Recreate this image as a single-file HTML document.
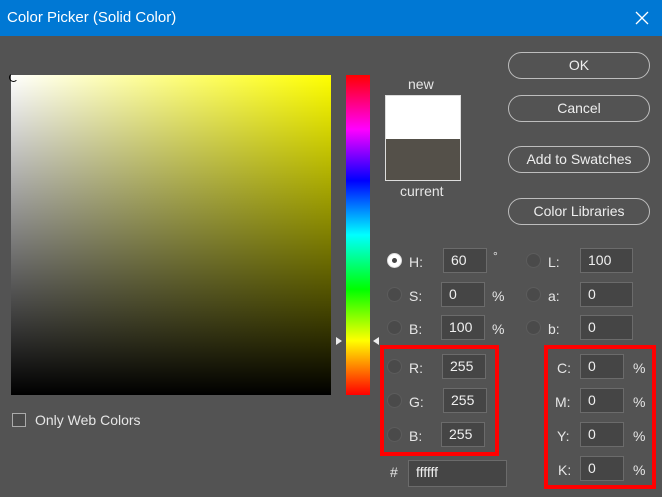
<!DOCTYPE html><html><head><style>
*{margin:0;padding:0;box-sizing:border-box}
body{width:662px;height:497px;background:#535353;font-family:"Liberation Sans",sans-serif;color:#e6e6e6;position:relative;overflow:hidden;font-size:14px}
.title{position:absolute;left:0;top:0;width:662px;height:36px;background:#0078d4;color:#fff;font-size:15px;line-height:36px;padding-left:7px}
.a{position:absolute}
.btn{position:absolute;left:508px;width:142px;height:27px;border:1.5px solid #bdbdbd;border-radius:14px;text-align:center;line-height:24px;font-size:14px;color:#eee}
.inp{position:absolute;height:25px;background:#454545;border:1px solid #6b6b6b;line-height:23px;padding-left:7px;color:#f0f0f0;font-size:14px}
.rad{position:absolute;width:15px;height:15px;border-radius:50%;background:#4a4a4a;border:1px solid #5c5c5c}
.lab{position:absolute;font-size:14px;color:#e6e6e6}
.red{position:absolute;border:4px solid #f00}
</style></head><body>
<div class="title">Color Picker (Solid Color)<svg style="position:absolute;left:635px;top:11px" width="14" height="14"><path d="M1 1L13 13M13 1L1 13" stroke="#fff" stroke-width="1.3"/></svg></div>
<div class="a" style="left:11px;top:75px;width:320px;height:320px;background:linear-gradient(to bottom,rgba(0,0,0,0),#000),linear-gradient(to right,#fff,#ff0)"></div>
<div class="a" style="left:9px;top:73px;width:9px;height:9px;border:1px solid #000;border-radius:50%;border-color:transparent transparent #000 #000"></div>
<div class="a" style="left:346px;top:75px;width:24px;height:320px;background:linear-gradient(to bottom,#f00,#f0f 17%,#00f 33%,#0ff 50%,#0f0 67%,#ff0 83%,#f00)"></div>
<div class="a" style="left:336px;top:337px;width:0;height:0;border-top:4px solid transparent;border-bottom:4px solid transparent;border-left:6px solid #eee"></div>
<div class="a" style="left:373px;top:337px;width:0;height:0;border-top:4px solid transparent;border-bottom:4px solid transparent;border-right:6px solid #eee"></div>
<div class="lab" style="left:408px;top:76px">new</div>
<div class="a" style="left:385px;top:95px;width:76px;height:86px;border:1px solid #ddd"><div style="height:43px;background:#fff"></div><div style="height:41px;background:#545049"></div></div>
<div class="lab" style="left:400px;top:183px">current</div>
<div class="btn" style="top:52px">OK</div>
<div class="btn" style="top:95px">Cancel</div>
<div class="btn" style="top:146px">Add to Swatches</div>
<div class="btn" style="top:198px">Color Libraries</div>

<div class="rad" style="left:387px;top:253px;background:#fff;border-color:#ddd"><div style="position:absolute;left:4px;top:4px;width:5px;height:5px;border-radius:50%;background:#444"></div></div>
<div class="lab" style="left:409px;top:254px">H:</div><div class="inp" style="left:443px;top:248px;width:44px">60</div><div class="lab" style="left:493px;top:249px;font-size:12px">°</div>
<div class="rad" style="left:387px;top:287px"></div><div class="lab" style="left:409px;top:288px">S:</div><div class="inp" style="left:441px;top:282px;width:44px">0</div><div class="lab" style="left:492px;top:288px">%</div>
<div class="rad" style="left:387px;top:320px"></div><div class="lab" style="left:409px;top:321px">B:</div><div class="inp" style="left:441px;top:315px;width:44px">100</div><div class="lab" style="left:492px;top:321px">%</div>
<div class="rad" style="left:526px;top:253px"></div><div class="lab" style="left:548px;top:254px">L:</div><div class="inp" style="left:580px;top:248px;width:53px">100</div>
<div class="rad" style="left:526px;top:287px"></div><div class="lab" style="left:548px;top:288px">a:</div><div class="inp" style="left:580px;top:282px;width:53px">0</div>
<div class="rad" style="left:526px;top:320px"></div><div class="lab" style="left:548px;top:321px">b:</div><div class="inp" style="left:580px;top:315px;width:53px">0</div>

<div class="red" style="left:380px;top:345px;width:119px;height:111px"></div>
<div class="rad" style="left:387px;top:359px"></div><div class="lab" style="left:409px;top:360px">R:</div><div class="inp" style="left:442px;top:354px;width:44px">255</div>
<div class="rad" style="left:387px;top:393px"></div><div class="lab" style="left:409px;top:394px">G:</div><div class="inp" style="left:443px;top:388px;width:44px">255</div>
<div class="rad" style="left:387px;top:427px"></div><div class="lab" style="left:409px;top:428px">B:</div><div class="inp" style="left:441px;top:422px;width:44px">255</div>
<div class="lab" style="left:390px;top:464px">#</div><div class="inp" style="left:408px;top:460px;width:99px;height:27px">ffffff</div>

<div class="red" style="left:544px;top:345px;width:112px;height:144px"></div>
<div class="lab" style="left:557px;top:360px">C:</div><div class="inp" style="left:580px;top:354px;width:44px">0</div><div class="lab" style="left:633px;top:360px">%</div>
<div class="lab" style="left:555px;top:394px">M:</div><div class="inp" style="left:580px;top:388px;width:44px">0</div><div class="lab" style="left:633px;top:394px">%</div>
<div class="lab" style="left:557px;top:428px">Y:</div><div class="inp" style="left:580px;top:422px;width:44px">0</div><div class="lab" style="left:633px;top:428px">%</div>
<div class="lab" style="left:558px;top:462px">K:</div><div class="inp" style="left:580px;top:456px;width:44px">0</div><div class="lab" style="left:633px;top:462px">%</div>

<div class="a" style="left:12px;top:413px;width:14px;height:14px;border:1px solid #aaa;background:#4a4a4a"></div>
<div class="lab" style="left:35px;top:412px">Only Web Colors</div>
</body></html>
